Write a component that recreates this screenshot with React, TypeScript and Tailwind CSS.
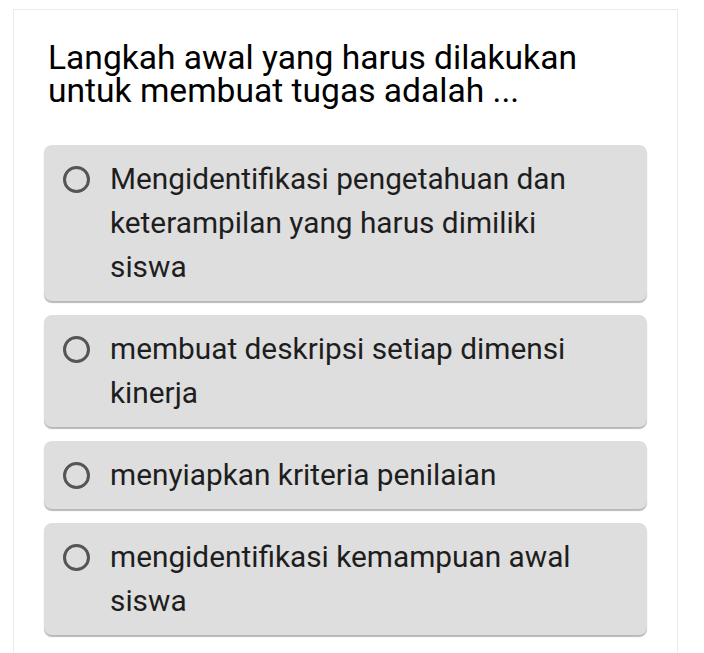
import React from 'react';

const options = [
  'Mengidentifikasi pengetahuan dan keterampilan yang harus dimiliki siswa',
  'membuat deskripsi setiap dimensi kinerja',
  'menyiapkan kriteria penilaian',
  'mengidentifikasi kemampuan awal siswa',
];

const RadioCircle: React.FC = () => (
  <span className="mt-[9px] h-[27px] w-[27px] shrink-0 rounded-full border-[3px] border-[#555555]" />
);

export default function App() {
  return (
    <div className="min-h-[653px] bg-white px-[13px] pt-[9px] font-['Roboto',sans-serif]">
      <div className="h-[660px] w-[665px] border border-[#ebebeb] pl-[34px] pr-[30px] pt-[32px]">
        <h1 className="text-[33.6px] leading-[32.5px] font-normal text-black">
          Langkah awal yang harus dilakukan
          <br />
          untuk membuat tugas adalah ...
        </h1>
        <div className="mt-[38px] flex flex-col gap-[14px]">
          {options.map((text, i) => (
            <label
              key={i}
              className="-ml-[4px] flex gap-[20px] rounded-[8px] bg-[#dedede] py-[12px] pl-[19px] pr-[49px] shadow-[0_2px_1px_rgba(0,0,0,0.28)]"
            >
              <RadioCircle />
              <span className="text-[29.8px] leading-[44px] text-[#1e1e1e]">{text}</span>
            </label>
          ))}
        </div>
      </div>
    </div>
  );
}
